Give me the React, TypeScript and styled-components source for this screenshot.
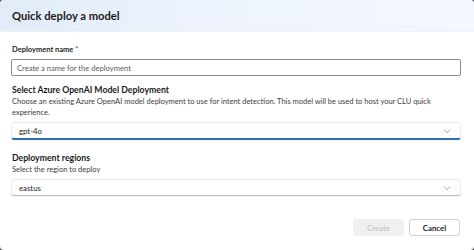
import { FC } from "react";
import styled, { createGlobalStyle } from "styled-components";

const GlobalStyle = createGlobalStyle`
  html, body {
    margin: 0;
    padding: 0;
    background: #5a5a5a;
  }
  * {
    box-sizing: border-box;
  }
`;

const FONT = `Lato, "Open Sans", sans-serif`;

const Chevron: FC = () => (
  <svg width="10" height="10" viewBox="0 0 10 10" fill="none">
    <path d="M1.8 3.6 L5 6.6 L8.2 3.6" stroke="#8a8a8a" strokeWidth="0.8" />
  </svg>
);

interface SelectProps {
  value: string;
  focused?: boolean;
}

const Select: FC<SelectProps> = ({ value, focused }) => (
  <StyledSelect $focused={focused}>
    <span>{value}</span>
    <Chevron />
  </StyledSelect>
);

const App: FC = () => (
  <>
    <GlobalStyle />
    <StyledDialog>
      <StyledHeader>Quick deploy a model</StyledHeader>
      <StyledBody>
        <StyledField>
          <StyledSmallLabel>
            Deployment name <StyledRequired>*</StyledRequired>
          </StyledSmallLabel>
          <StyledInput placeholder="Create a name for the deployment" />
        </StyledField>
        <StyledSection $top={8}>
          <StyledTitle>Select Azure OpenAI Model Deployment</StyledTitle>
          <StyledDescription>
            Choose an existing Azure OpenAI model deployment to use for intent
            detection. This model will be used to host your CLU quick
            experience.
          </StyledDescription>
          <Select value="gpt-4o" focused />
        </StyledSection>
        <StyledSection $top={12}>
          <StyledTitle>Deployment regions</StyledTitle>
          <StyledDescription>Select the region to deploy</StyledDescription>
          <Select value="eastus" />
        </StyledSection>
        <StyledFooter>
          <StyledButton disabled>Create</StyledButton>
          <StyledButton>Cancel</StyledButton>
        </StyledFooter>
      </StyledBody>
    </StyledDialog>
  </>
);

const StyledDialog = styled.div`
  width: 474px;
  height: 250px;
  background: #ffffff;
  border-radius: 4px;
  overflow: hidden;
  font-family: ${FONT};
  color: #242424;
  display: flex;
  flex-direction: column;
`;

const StyledHeader = styled.div`
  height: 32px;
  padding: 0 12px 1px 12px;
  display: flex;
  align-items: center;
  font-size: 11.2px;
  font-weight: 700;
  color: #1b1b1b;
  background: linear-gradient(90deg, #e1ecf8 0%, #ecf3fc 40%, #f4f8fe 100%);
  border-bottom: 1px solid #eef2f6;
`;

const StyledBody = styled.div`
  flex: 1;
  padding: 13px 12px 0 12px;
  display: flex;
  flex-direction: column;
`;

const StyledField = styled.div`
  display: flex;
  flex-direction: column;
  gap: 4px;
`;

const StyledSmallLabel = styled.div`
  font-size: 7.5px;
  font-weight: 700;
  line-height: 10px;
`;

const StyledRequired = styled.span`
  color: #c4314b;
`;

const StyledInput = styled.input`
  height: 17px;
  width: 450px;
  margin-left: -1px;
  border: 1px solid #8a8a8a;
  border-radius: 2px;
  padding: 0 5px;
  font-family: ${FONT};
  font-size: 7.6px;
  color: #242424;
  outline: none;
  &::placeholder {
    font-family: ${FONT};
    color: #5c5c5c;
  }
`;

const StyledSection = styled.div<{ $top: number }>`
  display: flex;
  flex-direction: column;
  margin-top: ${(p) => p.$top}px;
`;

const StyledTitle = styled.div`
  font-size: 8.7px;
  font-weight: 700;
  line-height: 11px;
  color: #1b1b1b;
`;

const StyledDescription = styled.div`
  font-size: 7.5px;
  line-height: 11px;
  color: #3d3d3d;
  margin-top: 1px;
  margin-bottom: 4px;
`;

const StyledSelect = styled.div<{ $focused?: boolean }>`
  width: 450px;
  height: ${(p) => (p.$focused ? 18 : 17)}px;
  margin-left: -1px;
  padding: 0 8px 0 7px;
  display: flex;
  align-items: center;
  justify-content: space-between;
  font-family: ${FONT};
  font-size: 7.8px;
  color: #242424;
  background: #ffffff;
  border: 1px solid #ececec;
  border-bottom: ${(p) => (p.$focused ? "2px solid #2f6fb8" : "1px solid #bdbdbd")};
  border-radius: 3px;
  box-shadow: 0 1px 1px rgba(0, 0, 0, 0.05);
`;

const StyledFooter = styled.div`
  margin-top: auto;
  margin-bottom: 14px;
  display: flex;
  justify-content: flex-end;
  gap: 5px;
  padding-right: 2px;
`;

const StyledButton = styled.button`
  width: 51px;
  height: 17px;
  font-family: ${FONT};
  font-size: 7.8px;
  font-weight: 700;
  border-radius: 3px;
  padding: 0;
  cursor: pointer;
  background: #ffffff;
  color: #242424;
  border: 1px solid #d1d1d1;
  &:disabled {
    background: #f0f0f0;
    border-color: #f0f0f0;
    color: #bdbdbd;
    font-weight: 400;
    cursor: default;
  }
`;

export default App;
